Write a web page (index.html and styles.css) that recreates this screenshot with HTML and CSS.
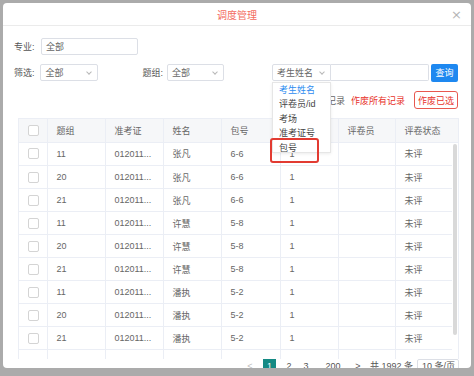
FILE: index.html
```html
<!DOCTYPE html>
<html lang="zh">
<head>
<meta charset="utf-8">
<link rel="stylesheet" href="styles.css">
</head>
<body>
<div class="dialog">
  <div class="header">
    <span></span>
    <span class="title">调度管理</span>
    <span class="close">×</span>
  </div>
  <div class="content">
    <div class="row row1">
      <span class="label">专业:</span>
      <div class="input w97">全部</div>
    </div>
    <div class="row row2">
      <span class="label">筛选:</span>
      <div class="select w59">全部<i class="chev"></i></div>
      <span class="label lbl2">题组:</span>
      <div class="select w58">全部<i class="chev"></i></div>
      <div class="search">
        <div class="select w59 sel3">考生姓名<i class="chev"></i>
          <ul class="menu">
            <li class="active">考生姓名</li>
            <li>评卷员/id</li>
            <li>考场</li>
            <li>准考证号</li>
            <li class="hl">包号</li>
          </ul>
        </div>
        <div class="input w98"></div>
        <button class="btn-blue">查询</button>
      </div>
    </div>
    <div class="row row3">
      <span class="link">作废本页记录</span>
      <span class="link red">作废所有记录</span>
      <button class="btn-red">作废已选</button>
    </div>
    <div class="table">
      <table class="thead">
        <colgroup><col class="c0"><col class="c1"><col class="c1"><col class="c1"><col class="c2"><col class="c1"><col class="c3"><col class="c4"></colgroup>
        <tr><th><span class="cb"></span></th><th>题组</th><th>准考证</th><th>姓名</th><th>包号</th><th></th><th>评卷员</th><th>评卷状态</th></tr>
      </table>
      <div class="tbody">
        <table class="rows">
          <colgroup><col class="c0"><col class="c1"><col class="c1"><col class="c1"><col class="c2"><col class="c1"><col class="c3"><col class="c5"></colgroup>
          <tr><td><span class="cb"></span></td><td>11</td><td>012011...</td><td>张凡</td><td>6-6</td><td>1</td><td></td><td>未评</td></tr>
          <tr><td><span class="cb"></span></td><td>20</td><td>012011...</td><td>张凡</td><td>6-6</td><td>1</td><td></td><td>未评</td></tr>
          <tr><td><span class="cb"></span></td><td>21</td><td>012011...</td><td>张凡</td><td>6-6</td><td>1</td><td></td><td>未评</td></tr>
          <tr><td><span class="cb"></span></td><td>11</td><td>012011...</td><td>许慧</td><td>5-8</td><td>1</td><td></td><td>未评</td></tr>
          <tr><td><span class="cb"></span></td><td>20</td><td>012011...</td><td>许慧</td><td>5-8</td><td>1</td><td></td><td>未评</td></tr>
          <tr><td><span class="cb"></span></td><td>21</td><td>012011...</td><td>许慧</td><td>5-8</td><td>1</td><td></td><td>未评</td></tr>
          <tr><td><span class="cb"></span></td><td>11</td><td>012011...</td><td>潘执</td><td>5-2</td><td>1</td><td></td><td>未评</td></tr>
          <tr><td><span class="cb"></span></td><td>20</td><td>012011...</td><td>潘执</td><td>5-2</td><td>1</td><td></td><td>未评</td></tr>
          <tr><td><span class="cb"></span></td><td>21</td><td>012011...</td><td>潘执</td><td>5-2</td><td>1</td><td></td><td>未评</td></tr>
          <tr class="empty"><td></td><td></td><td></td><td></td><td></td><td></td><td></td><td></td></tr>
        </table>
        <div class="track"><div class="thumb"></div></div>
      </div>
    </div>
    <div class="pager">
      <span class="pg prev">&lt;</span>
      <span class="pg cur">1</span>
      <span class="pg p2">2</span>
      <span class="pg p3">3</span>
      <span class="pg dots">...</span>
      <span class="pg p200">200</span>
      <span class="pg next">&gt;</span>
      <span class="total">共 1992 条</span>
      <span class="size">10 条/页<i class="chev"></i></span>
    </div>
  </div>
</div>
</body>
</html>
```
FILE: styles.css
```css
* { box-sizing: border-box; }
html, body { margin: 0; padding: 0; }
body {
  width: 474px;
  height: 376px;
  overflow: hidden;
  background: #ababab;
  padding: 3px;
  font-family: "Liberation Sans", "Noto Sans CJK SC", sans-serif;
  font-size: 9px;
  color: #606266;
}
.dialog {
  width: 468px;
  height: 365px;
  background: #fff;
  border-radius: 4px;
  overflow: hidden;
}
.header {
  height: 23px;
  border-bottom: 1px solid #ebebeb;
  display: grid;
  grid-template-columns: 1fr auto 1fr;
  align-items: center;
}
.title { color: #f36b60; font-size: 10px; }
.close { justify-self: end; margin-right: 9px; color: #b5b5b5; font-size: 13px; font-family: "DejaVu Sans", sans-serif; }
.content { padding: 0 13px 0 11px; }
.row { display: flex; align-items: center; }
.row1 { margin-top: 12px; height: 17px; }
.row2 { margin-top: 9px; height: 17px; }
.row3 { margin-top: 10px; height: 18px; justify-content: flex-end; }
.label { width: 27px; color: #555; white-space: nowrap; }
.lbl2 { margin-left: 44px; width: 25px; }
.input, .select {
  height: 17px;
  border: 1px solid #dcdfe6;
  border-radius: 2px;
  padding-left: 4px;
  display: flex;
  align-items: center;
  color: #666;
  background: #fff;
  position: relative;
}
.w97 { width: 97px; }
.w98 { width: 98px; border-radius: 0 2px 2px 0; border-left: none; }
.w59 { width: 59px; }
.w58 { width: 58px; }
.chev {
  position: absolute;
  right: 6px;
  top: 5px;
  width: 4px;
  height: 4px;
  border-right: 1px solid #b8b8b8;
  border-bottom: 1px solid #b8b8b8;
  transform: rotate(45deg);
}
.search { display: flex; align-items: center; margin-left: 48px; }
.sel3 { border-radius: 2px 0 0 2px; }
.btn-blue {
  margin-left: 2px;
  width: 27px;
  height: 18px;
  border: none;
  border-radius: 2px;
  background: #1e88f0;
  color: #fff;
  font: inherit;
  padding: 0;
}
.menu {
  position: absolute;
  left: -1px;
  top: 17px;
  width: 59px;
  margin: 0;
  padding: 0;
  list-style: none;
  background: #fff;
  border: 1px solid #e6e6e6;
  box-shadow: 0 1px 3px rgba(0,0,0,0.08);
  z-index: 5;
  height: 71px;
}
.menu li { height: 14.4px; line-height: 14px; padding-left: 6px; color: #444; white-space: nowrap; position: relative; }
.menu li.active { color: #2d8cf0; }
.menu li.hl::after {
  content: "";
  position: absolute;
  left: -3px;
  top: -3px;
  width: 45px;
  height: 21px;
  border: 2px solid #e23b32;
  border-radius: 3px;
}
.link { color: #666; margin-right: 6px; }
.red { color: #e8322a; margin-right: 9px; }
.btn-red {
  width: 44px;
  height: 18px;
  border: 1px solid #e8584f;
  border-radius: 3px;
  background: #fff;
  color: #e8322a;
  font: inherit;
  padding: 0;
}
.table {
  margin-top: 9px;
  margin-left: 4px;
  width: 441px;
  border-left: 1px solid #ebeef5;
  border-right: 1px solid #ebeef5;
  border-top: 1px solid #ebeef5;
}
table { border-collapse: collapse; table-layout: fixed; }
.thead { width: 439px; background: #f6f7f9; }
.rows { width: 433px; }
col.c0 { width: 28px; }
col.c1 { width: 58px; }
col.c2 { width: 59px; }
col.c3 { width: 57px; }
col.c4 { width: 63px; }
col.c5 { width: 57px; }
th, td {
  height: 23px;
  padding: 0 0 0 9px;
  text-align: left;
  font-weight: normal;
  border-right: 1px solid #ebeef5;
  border-bottom: 1px solid #ebeef5;
  white-space: nowrap;
  overflow: hidden;
  color: #666;
}
th:last-child, td:last-child { border-right: none; }
.cb {
  display: block;
  width: 11px;
  height: 11px;
  border: 1px solid #d4d4d4;
  border-radius: 2px;
  background: #fff;
}
.tbody { display: flex; height: 216px; overflow: hidden; }
.track { width: 6px; flex: none; }
.thumb { margin: 1px 0 0 1px; width: 4px; height: 191px; background: #d9d9d9; border-radius: 2px; }
.pager {
  display: flex;
  align-items: center;
  height: 14px;
  padding-left: 232px;
  color: #555;
  white-space: nowrap;
}
.pg { height: 14px; text-align: center; line-height: 14px; flex: none; }
.prev { width: 8px; color: #c0c0c0; }
.cur { width: 13px; margin-left: 9px; background: #158a84; color: #fff; }
.p2 { width: 12px; margin-left: 7px; }
.p3 { width: 12px; margin-left: 5px; }
.dots { width: 8px; margin-left: 2px; color: #999; }
.p200 { width: 16px; margin-left: 3px; }
.next { width: 8px; margin-left: 13px; }
.total { margin-left: 8px; flex: none; }
.size {
  flex: none;
  margin-left: 4px;
  width: 42px;
  height: 14px;
  border: 1px solid #dcdfe6;
  border-radius: 2px;
  padding-left: 4px;
  position: relative;
  line-height: 12px;
}
.size .chev { top: 3px; right: 4px; width: 3px; height: 3px; }
```
